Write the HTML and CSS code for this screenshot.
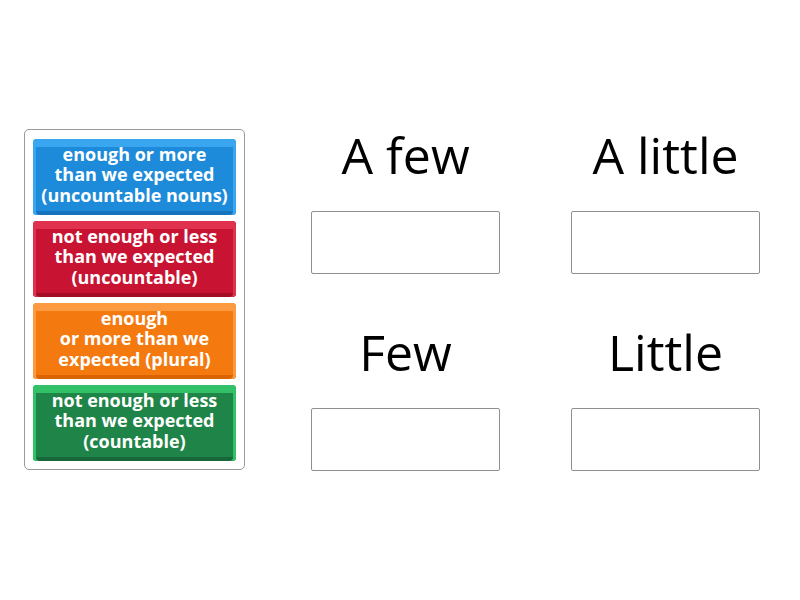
FILE: index.html
```
<!DOCTYPE html>
<html>
<head>
<meta charset="utf-8">
<link rel="stylesheet" href="styles.css">
</head>
<body>
<div class="stage">
  <div class="panel">
    <div class="tile blue">enough or more<br>than we expected<br>(uncountable nouns)</div>
    <div class="tile red">not enough or less<br>than we expected<br>(uncountable)</div>
    <div class="tile orange">enough<br>or more than we<br>expected (plural)</div>
    <div class="tile green">not enough or less<br>than we expected<br>(countable)</div>
  </div>
  <div class="targets">
    <div class="cell"><div class="label">A few</div><div class="drop"></div></div>
    <div class="cell"><div class="label">A little</div><div class="drop"></div></div>
    <div class="cell"><div class="label">Few</div><div class="drop"></div></div>
    <div class="cell"><div class="label">Little</div><div class="drop"></div></div>
  </div>
</div>
</body>
</html>
```
FILE: styles.css
```
html, body {
  margin: 0;
  padding: 0;
  background: #ffffff;
  font-family: "Open Sans", "Liberation Sans", sans-serif;
}
.stage {
  display: flex;
  align-items: flex-start;
  padding: 125px 0 0 24px;
}
.panel {
  margin-top: 4px;
  width: 203px;
  padding: 9px 8px 8px 8px;
  border: 1px solid #9a9a9a;
  border-radius: 5px;
  display: flex;
  flex-direction: column;
  gap: 6px;
}
.tile {
  height: 76px;
  box-sizing: border-box;
  border-radius: 4px;
  padding-bottom: 5px;
  display: flex;
  align-items: center;
  justify-content: center;
  text-align: center;
  color: #ffffff;
  font-weight: 700;
  font-size: 18px;
  line-height: 20.5px;
  white-space: nowrap;
}
.blue {
  background: #1d8bd9;
  box-shadow: inset 0 8px 0 #3aa6f0, inset 3px 0 0 #3aa6f0, inset -3px 0 0 #3aa6f0, inset 0 -4px 0 #1572bd;
}
.red {
  background: #c81432;
  box-shadow: inset 0 8px 0 #e0324f, inset 3px 0 0 #e0324f, inset -3px 0 0 #e0324f, inset 0 -4px 0 #a30d26;
}
.orange {
  background: #f47a10;
  box-shadow: inset 0 8px 0 #fc9a42, inset 3px 0 0 #fc9a42, inset -3px 0 0 #fc9a42, inset 0 -4px 0 #d96400;
}
.green {
  background: #1f8447;
  box-shadow: inset 0 8px 0 #33c168, inset 3px 0 0 #33c168, inset -3px 0 0 #33c168, inset 0 -4px 0 #17673a;
}
.targets {
  margin-left: 66px;
  display: grid;
  grid-template-columns: 189px 189px;
  column-gap: 71px;
  row-gap: 48px;
}
.cell {
  display: flex;
  flex-direction: column;
  align-items: center;
}
.label {
  font-size: 50px;
  line-height: 60px;
  color: #000000;
  margin-bottom: 26px;
  white-space: nowrap;
}
.drop {
  width: 189px;
  height: 63px;
  box-sizing: border-box;
  border: 1px solid #8f8f8f;
  border-radius: 2px;
  background: #ffffff;
}
```
